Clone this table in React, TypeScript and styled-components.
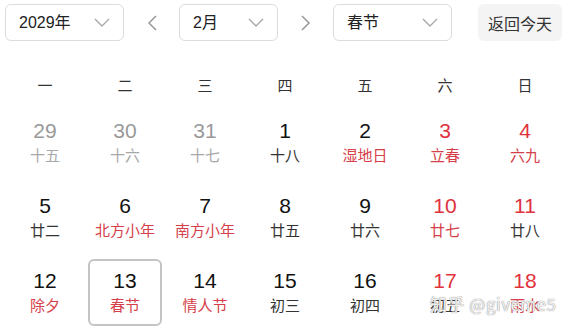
import React from "react";
import styled, { createGlobalStyle } from "styled-components";

const Global = createGlobalStyle`
  html, body { margin: 0; padding: 0; background: #fff; }
  body { font-family: "Liberation Sans", "Noto Sans CJK SC", Arial, sans-serif; }
`;

const Page = styled.div`
  position: relative;
  width: 568px;
  height: 329px;
  overflow: hidden;
  background: #fff;
`;

const Toolbar = styled.div`
  display: flex;
  align-items: center;
  padding: 4px 0 0 5px;
  height: 37px;
`;

const Select = styled.div<{ $w: number }>`
  box-sizing: border-box;
  width: ${(p) => p.$w}px;
  height: 37px;
  border: 1px solid #dcdcdc;
  border-radius: 6px;
  display: flex;
  align-items: center;
  justify-content: space-between;
  padding: 0 13px 0 13px;
  font-size: 16px;
  color: #222;
`;

const SelectText = styled.span`
  font-family: "Liberation Sans", "Noto Sans CJK SC", sans-serif;
  line-height: 20px;
`;

const ArrowSlot = styled.div`
  width: 55px;
  display: flex;
  justify-content: center;
  align-items: center;
`;

const TodayButton = styled.div`
  margin-left: 26px;
  height: 37px;
  padding: 0 10px;
  border-radius: 6px;
  background: #f4f4f4;
  display: flex;
  align-items: center;
  font-size: 16px;
  color: #333;
  font-family: "Noto Sans CJK SC", sans-serif;
`;

const WeekRow = styled.div`
  display: grid;
  grid-template-columns: repeat(7, 80px);
  margin: 23px 0 0 5px;
  height: 41px;
  align-items: center;
`;

const WeekDay = styled.div`
  text-align: center;
  font-size: 15px;
  color: #333;
  font-family: "Noto Sans CJK SC", sans-serif;
`;

const Grid = styled.div`
  display: grid;
  grid-template-columns: repeat(7, 80px);
  grid-auto-rows: 75px;
  margin-left: 5px;
`;

const Cell = styled.div`
  display: flex;
  align-items: stretch;
  justify-content: stretch;
  padding: 4px 3px;
`;

const CellBox = styled.div<{ $today?: boolean }>`
  flex: 1;
  box-sizing: border-box;
  border: 2px solid ${(p) => (p.$today ? "#c4c4c4" : "transparent")};
  border-radius: 6px;
  display: flex;
  flex-direction: column;
  align-items: center;
  padding-top: 8px;
`;

const Num = styled.div<{ $tone: "normal" | "red" | "muted" }>`
  font-family: "Liberation Sans", Arial, sans-serif;
  font-size: 21px;
  line-height: 24px;
  color: ${(p) => (p.$tone === "red" ? "#e0323c" : p.$tone === "muted" ? "#999" : "#111")};
`;

const Lunar = styled.div<{ $tone: "normal" | "red" | "muted" }>`
  margin-top: 2px;
  font-family: "Noto Sans CJK SC", sans-serif;
  font-size: 15px;
  line-height: 20px;
  color: ${(p) => (p.$tone === "red" ? "#d6404a" : p.$tone === "muted" ? "#a8a8a8" : "#333")};
`;

const Watermark = styled.div`
  position: absolute;
  left: 430px;
  top: 291px;
  font-size: 17px;
  font-family: "Noto Sans CJK SC", "Liberation Sans", sans-serif;
  color: rgba(255, 255, 255, 0.85);
  text-shadow: 0 0 1px #999, 0 0 1px #999;
  letter-spacing: 0.5px;
  pointer-events: none;
`;

const Chevron = () => (
  <svg width="16" height="9" viewBox="0 0 16 9">
    <polyline points="1,1 8,8 15,1" fill="none" stroke="#a8a8a8" strokeWidth="1.4" />
  </svg>
);

const Arrow = ({ dir }: { dir: "l" | "r" }) => (
  <svg width="10" height="16" viewBox="0 0 10 16">
    <polyline
      points={dir === "l" ? "9,1 2,8 9,15" : "1,1 8,8 1,15"}
      fill="none"
      stroke="#999"
      strokeWidth="1.5"
    />
  </svg>
);

type Tone = "normal" | "red" | "muted";
type Day = { n: number; l: string; nt: Tone; lt: Tone; today?: boolean };

const days: Day[] = [
  { n: 29, l: "十五", nt: "muted", lt: "muted" },
  { n: 30, l: "十六", nt: "muted", lt: "muted" },
  { n: 31, l: "十七", nt: "muted", lt: "muted" },
  { n: 1, l: "十八", nt: "normal", lt: "normal" },
  { n: 2, l: "湿地日", nt: "normal", lt: "red" },
  { n: 3, l: "立春", nt: "red", lt: "red" },
  { n: 4, l: "六九", nt: "red", lt: "red" },
  { n: 5, l: "廿二", nt: "normal", lt: "normal" },
  { n: 6, l: "北方小年", nt: "normal", lt: "red" },
  { n: 7, l: "南方小年", nt: "normal", lt: "red" },
  { n: 8, l: "廿五", nt: "normal", lt: "normal" },
  { n: 9, l: "廿六", nt: "normal", lt: "normal" },
  { n: 10, l: "廿七", nt: "red", lt: "red" },
  { n: 11, l: "廿八", nt: "red", lt: "normal" },
  { n: 12, l: "除夕", nt: "normal", lt: "red" },
  { n: 13, l: "春节", nt: "normal", lt: "red", today: true },
  { n: 14, l: "情人节", nt: "normal", lt: "red" },
  { n: 15, l: "初三", nt: "normal", lt: "normal" },
  { n: 16, l: "初四", nt: "normal", lt: "normal" },
  { n: 17, l: "初五", nt: "red", lt: "normal" },
  { n: 18, l: "雨水", nt: "red", lt: "red" },
];

const weekdays = ["一", "二", "三", "四", "五", "六", "日"];

export default function App() {
  return (
    <Page>
      <Global />
      <Toolbar>
        <Select $w={119}>
          <SelectText>2029年</SelectText>
          <Chevron />
        </Select>
        <ArrowSlot>
          <Arrow dir="l" />
        </ArrowSlot>
        <Select $w={99}>
          <SelectText>2月</SelectText>
          <Chevron />
        </Select>
        <ArrowSlot>
          <Arrow dir="r" />
        </ArrowSlot>
        <Select $w={119}>
          <SelectText>春节</SelectText>
          <Chevron />
        </Select>
        <TodayButton>返回今天</TodayButton>
      </Toolbar>
      <WeekRow>
        {weekdays.map((w) => (
          <WeekDay key={w}>{w}</WeekDay>
        ))}
      </WeekRow>
      <Grid>
        {days.map((d, i) => (
          <Cell key={i}>
            <CellBox $today={d.today}>
              <Num $tone={d.nt}>{d.n}</Num>
              <Lunar $tone={d.lt}>{d.l}</Lunar>
            </CellBox>
          </Cell>
        ))}
      </Grid>
      <Watermark>知乎 @giveme5</Watermark>
    </Page>
  );
}
